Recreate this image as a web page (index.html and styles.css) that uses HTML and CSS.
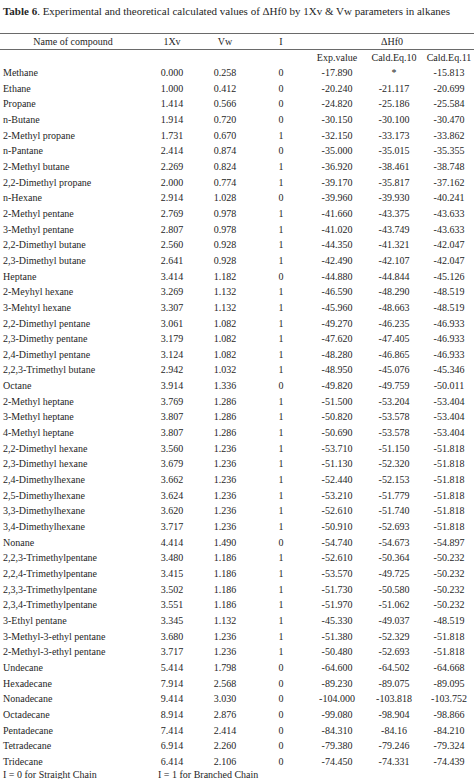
FILE: index.html
```html
<!DOCTYPE html>
<html>
<head>
<meta charset="utf-8">
<link rel="stylesheet" href="styles.css">
</head>
<body>
<div class="page">
<p class="title"><b>Table 6</b>. Experimental and theoretical calculated values of ΔHf0 by 1Xv &amp; Vw parameters in alkanes</p>
<table class="data">
<colgroup>
<col class="c-name"><col class="c-x"><col class="c-vw"><col class="c-i"><col class="c-exp"><col class="c-e10"><col class="c-e11">
</colgroup>
<thead>
<tr class="head"><th class="hname">Name of compound</th><th>1Xv</th><th>Vw</th><th>I</th><th colspan="3">ΔHf0</th></tr>
<tr class="sub"><th></th><th></th><th></th><th></th><th>Exp.value</th><th>Cald.Eq.10</th><th>Cald.Eq.11</th></tr>
</thead>
<tbody>
<tr><td>Methane</td><td>0.000</td><td>0.258</td><td>0</td><td>-17.890</td><td>*</td><td>-15.813</td></tr>
<tr><td>Ethane</td><td>1.000</td><td>0.412</td><td>0</td><td>-20.240</td><td>-21.117</td><td>-20.699</td></tr>
<tr><td>Propane</td><td>1.414</td><td>0.566</td><td>0</td><td>-24.820</td><td>-25.186</td><td>-25.584</td></tr>
<tr><td>n-Butane</td><td>1.914</td><td>0.720</td><td>0</td><td>-30.150</td><td>-30.100</td><td>-30.470</td></tr>
<tr><td>2-Methyl propane</td><td>1.731</td><td>0.670</td><td>1</td><td>-32.150</td><td>-33.173</td><td>-33.862</td></tr>
<tr><td>n-Pantane</td><td>2.414</td><td>0.874</td><td>0</td><td>-35.000</td><td>-35.015</td><td>-35.355</td></tr>
<tr><td>2-Methyl butane</td><td>2.269</td><td>0.824</td><td>1</td><td>-36.920</td><td>-38.461</td><td>-38.748</td></tr>
<tr><td>2,2-Dimethyl propane</td><td>2.000</td><td>0.774</td><td>1</td><td>-39.170</td><td>-35.817</td><td>-37.162</td></tr>
<tr><td>n-Hexane</td><td>2.914</td><td>1.028</td><td>0</td><td>-39.960</td><td>-39.930</td><td>-40.241</td></tr>
<tr><td>2-Methyl pentane</td><td>2.769</td><td>0.978</td><td>1</td><td>-41.660</td><td>-43.375</td><td>-43.633</td></tr>
<tr><td>3-Methyl pentane</td><td>2.807</td><td>0.978</td><td>1</td><td>-41.020</td><td>-43.749</td><td>-43.633</td></tr>
<tr><td>2,2-Dimethyl butane</td><td>2.560</td><td>0.928</td><td>1</td><td>-44.350</td><td>-41.321</td><td>-42.047</td></tr>
<tr><td>2,3-Dimethyl butane</td><td>2.641</td><td>0.928</td><td>1</td><td>-42.490</td><td>-42.107</td><td>-42.047</td></tr>
<tr><td>Heptane</td><td>3.414</td><td>1.182</td><td>0</td><td>-44.880</td><td>-44.844</td><td>-45.126</td></tr>
<tr><td>2-Meyhyl hexane</td><td>3.269</td><td>1.132</td><td>1</td><td>-46.590</td><td>-48.290</td><td>-48.519</td></tr>
<tr><td>3-Mehtyl hexane</td><td>3.307</td><td>1.132</td><td>1</td><td>-45.960</td><td>-48.663</td><td>-48.519</td></tr>
<tr><td>2,2-Dimethyl pentane</td><td>3.061</td><td>1.082</td><td>1</td><td>-49.270</td><td>-46.235</td><td>-46.933</td></tr>
<tr><td>2,3-Dimethy pentane</td><td>3.179</td><td>1.082</td><td>1</td><td>-47.620</td><td>-47.405</td><td>-46.933</td></tr>
<tr><td>2,4-Dimethyl pentane</td><td>3.124</td><td>1.082</td><td>1</td><td>-48.280</td><td>-46.865</td><td>-46.933</td></tr>
<tr><td>2,2,3-Trimethyl butane</td><td>2.942</td><td>1.032</td><td>1</td><td>-48.950</td><td>-45.076</td><td>-45.346</td></tr>
<tr><td>Octane</td><td>3.914</td><td>1.336</td><td>0</td><td>-49.820</td><td>-49.759</td><td>-50.011</td></tr>
<tr><td>2-Methyl heptane</td><td>3.769</td><td>1.286</td><td>1</td><td>-51.500</td><td>-53.204</td><td>-53.404</td></tr>
<tr><td>3-Methyl heptane</td><td>3.807</td><td>1.286</td><td>1</td><td>-50.820</td><td>-53.578</td><td>-53.404</td></tr>
<tr><td>4-Methyl heptane</td><td>3.807</td><td>1.286</td><td>1</td><td>-50.690</td><td>-53.578</td><td>-53.404</td></tr>
<tr><td>2,2-Dimethyl hexane</td><td>3.560</td><td>1.236</td><td>1</td><td>-53.710</td><td>-51.150</td><td>-51.818</td></tr>
<tr><td>2,3-Dimethyl hexane</td><td>3.679</td><td>1.236</td><td>1</td><td>-51.130</td><td>-52.320</td><td>-51.818</td></tr>
<tr><td>2,4-Dimethylhexane</td><td>3.662</td><td>1.236</td><td>1</td><td>-52.440</td><td>-52.153</td><td>-51.818</td></tr>
<tr><td>2,5-Dimethylhexane</td><td>3.624</td><td>1.236</td><td>1</td><td>-53.210</td><td>-51.779</td><td>-51.818</td></tr>
<tr><td>3,3-Dimethylhexane</td><td>3.620</td><td>1.236</td><td>1</td><td>-52.610</td><td>-51.740</td><td>-51.818</td></tr>
<tr><td>3,4-Dimethylhexane</td><td>3.717</td><td>1.236</td><td>1</td><td>-50.910</td><td>-52.693</td><td>-51.818</td></tr>
<tr><td>Nonane</td><td>4.414</td><td>1.490</td><td>0</td><td>-54.740</td><td>-54.673</td><td>-54.897</td></tr>
<tr><td>2,2,3-Trimethylpentane</td><td>3.480</td><td>1.186</td><td>1</td><td>-52.610</td><td>-50.364</td><td>-50.232</td></tr>
<tr><td>2,2,4-Trimethylpentane</td><td>3.415</td><td>1.186</td><td>1</td><td>-53.570</td><td>-49.725</td><td>-50.232</td></tr>
<tr><td>2,3,3-Trimethylpentane</td><td>3.502</td><td>1.186</td><td>1</td><td>-51.730</td><td>-50.580</td><td>-50.232</td></tr>
<tr><td>2,3,4-Trimethylpentane</td><td>3.551</td><td>1.186</td><td>1</td><td>-51.970</td><td>-51.062</td><td>-50.232</td></tr>
<tr><td>3-Ethyl pentane</td><td>3.345</td><td>1.132</td><td>1</td><td>-45.330</td><td>-49.037</td><td>-48.519</td></tr>
<tr><td>3-Methyl-3-ethyl pentane</td><td>3.680</td><td>1.236</td><td>1</td><td>-51.380</td><td>-52.329</td><td>-51.818</td></tr>
<tr><td>2-Methyl-3-ethyl pentane</td><td>3.717</td><td>1.236</td><td>1</td><td>-50.480</td><td>-52.693</td><td>-51.818</td></tr>
<tr><td>Undecane</td><td>5.414</td><td>1.798</td><td>0</td><td>-64.600</td><td>-64.502</td><td>-64.668</td></tr>
<tr><td>Hexadecane</td><td>7.914</td><td>2.568</td><td>0</td><td>-89.230</td><td>-89.075</td><td>-89.095</td></tr>
<tr><td>Nonadecane</td><td>9.414</td><td>3.030</td><td>0</td><td>-104.000</td><td>-103.818</td><td>-103.752</td></tr>
<tr><td>Octadecane</td><td>8.914</td><td>2.876</td><td>0</td><td>-99.080</td><td>-98.904</td><td>-98.866</td></tr>
<tr><td>Pentadecane</td><td>7.414</td><td>2.414</td><td>0</td><td>-84.310</td><td>-84.16</td><td>-84.210</td></tr>
<tr><td>Tetradecane</td><td>6.914</td><td>2.260</td><td>0</td><td>-79.380</td><td>-79.246</td><td>-79.324</td></tr>
<tr><td>Tridecane</td><td>6.414</td><td>2.106</td><td>0</td><td>-74.450</td><td>-74.331</td><td>-74.439</td></tr>
</tbody>
</table>
<div class="foot"><span class="foot-a">I = 0 for Straight Chain</span><span>I = 1 for Branched Chain</span></div>
</div>
</body>
</html>
```
FILE: styles.css
```css
html, body {
  margin: 0;
  padding: 0;
  background: #ffffff;
}
.page {
  width: 474px;
  font-family: "Liberation Serif", "Times New Roman", serif;
  font-size: 10px;
  color: #262626;
}
.title {
  margin: 0;
  padding: 5px 0 0 3px;
  line-height: 12px;
  height: 33px;
  box-sizing: border-box;
  font-size: 11px;
  white-space: nowrap;
}
.title b {
  font-weight: bold;
}
.data {
  width: 474px;
  table-layout: fixed;
  border-collapse: collapse;
  border-spacing: 0;
  border-top: 1px solid #6a6a6a;
}
.c-name { width: 146px; }
.c-x { width: 52px; }
.c-vw { width: 54px; }
.c-i { width: 58px; }
.c-exp { width: 54px; }
.c-e10 { width: 60px; }
.c-e11 { width: 50px; }
.data th {
  font-weight: normal;
  padding: 0;
  text-align: center;
  white-space: nowrap;
}
.head th {
  height: 15px;
  line-height: 15px;
  border-bottom: 1px solid #6a6a6a;
}
.sub th {
  height: 15px;
  line-height: 15px;
}
.data td {
  padding: 0;
  height: 15.65px;
  line-height: 15.65px;
  text-align: center;
  white-space: nowrap;
}
.data td:first-child {
  text-align: left;
  padding-left: 3px;
}
.foot {
  display: flex;
  line-height: 9px;
  padding-left: 3px;
  white-space: nowrap;
}
.foot-a {
  width: 155px;
}
```
